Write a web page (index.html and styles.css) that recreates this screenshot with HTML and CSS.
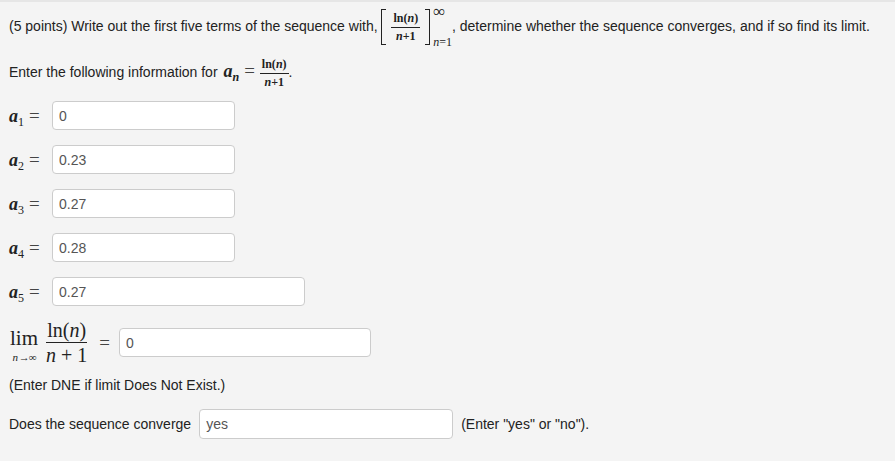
FILE: index.html
```html
<!DOCTYPE html>
<html>
<head>
    <link rel="stylesheet" href="styles.css">
</head>
<body>
    <div class="problem">
        <p class="intro">(5 points) Write out the first five terms of the sequence with,
            <span class="seq">
                <span class="bracket left"></span>
                <span class="frac small">
                    <span class="num">ln(<i>n</i>)</span>
                    <span class="den"><i>n</i>+1</span>
                </span>
                <span class="bracket right"></span>
                <span class="limits">
                    <span class="sup">∞</span>
                    <span class="sub"><i>n</i>=1</span>
                </span>
            </span>, determine whether the sequence converges, and if so find its limit.</p>

        <p class="intro second">Enter the following information for
            <span class="mvar"><i>a</i><sub><i>n</i></sub></span><span class="eq">=</span><span class="frac small">
                <span class="num">ln(<i>n</i>)</span>
                <span class="den"><i>n</i>+1</span>
            </span>.</p>

        <div class="answers">
            <div class="row">
                <span class="lbl"><i>a</i><sub>1</sub><span class="eq">=</span></span>
                <input class="ans" value="0">
            </div>
            <div class="row">
                <span class="lbl"><i>a</i><sub>2</sub><span class="eq">=</span></span>
                <input class="ans" value="0.23">
            </div>
            <div class="row">
                <span class="lbl"><i>a</i><sub>3</sub><span class="eq">=</span></span>
                <input class="ans" value="0.27">
            </div>
            <div class="row">
                <span class="lbl"><i>a</i><sub>4</sub><span class="eq">=</span></span>
                <input class="ans" value="0.28">
            </div>
            <div class="row">
                <span class="lbl"><i>a</i><sub>5</sub><span class="eq">=</span></span>
                <input class="ans wide" value="0.27">
            </div>
            <div class="row limit-row">
                <span class="lim">
                    <span class="lim-word">lim</span>
                    <span class="lim-under"><i>n</i> →∞</span>
                </span>
                <span class="frac big">
                    <span class="num">ln(<i>n</i>)</span>
                    <span class="den"><i>n</i> + 1</span>
                </span>
                <span class="eq">=</span>
                <input class="ans limit" value="0">
            </div>
        </div>

        <p class="note">(Enter DNE if limit Does Not Exist.)</p>

        <div class="converge">
            <span>Does the sequence converge</span>
            <input class="ans yesno" value="yes">
            <span>(Enter "yes" or "no").</span>
        </div>
    </div>
</body>
</html>
```

FILE: styles.css
```css
body {
    margin: 0;
    background: #f4f4f4;
    font-family: "Liberation Sans", Arial, sans-serif;
    font-size: 14px;
    color: #222;
}
.problem {
    border-top: 2px solid #e6e6e6;
    padding: 0 9px;
    height: 459px;
}
.intro {
    margin: 4px 0 0;
    line-height: 20px;
}
.intro.second {
    margin-top: 10px;
}
i {
    font-family: "Liberation Serif", "DejaVu Serif", serif;
    font-style: italic;
}
.seq {
    display: inline-flex;
    align-items: center;
    vertical-align: middle;
    height: 42px;
}
.bracket {
    width: 4px;
    height: 34px;
    border: 1.5px solid #222;
}
.bracket.left {
    border-right: none;
    margin-right: 5px;
}
.bracket.right {
    border-left: none;
    margin-left: 5px;
}
.limits {
    display: flex;
    flex-direction: column;
    justify-content: space-between;
    height: 42px;
    margin-left: 3px;
    font-family: "Liberation Serif", serif;
    font-size: 13px;
    line-height: 12px;
}
.sup {
    font-size: 17px;
    line-height: 12px;
}
.sub {
    font-size: 12px;
}
.frac {
    display: inline-flex;
    flex-direction: column;
    align-items: center;
    vertical-align: middle;
    font-family: "Liberation Serif", "DejaVu Serif", serif;
}
.frac .num {
    border-bottom: 1px solid #222;
    padding: 0 2px;
}
.frac.small {
    font-size: 12px;
    line-height: 13px;
    font-weight: bold;
}
.frac.small .num {
    padding-bottom: 2px;
}
.frac.small .den {
    padding-top: 2px;
}
.frac.big {
    font-size: 20px;
    line-height: 20px;
    margin-left: 8px;
}
.frac.big .num {
    padding: 0 1px 2px;
}
.frac.big .den {
    padding-top: 2px;
}
.mvar {
    font-size: 18px;
    margin-left: 2px;
}
.mvar i {
    font-weight: bold;
}
sub {
    font-family: "Liberation Serif", serif;
    font-size: 12px;
    vertical-align: -4px;
    line-height: 0;
}
.eq {
    font-family: "Liberation Serif", serif;
    font-size: 19px;
    color: #444;
    margin: 0 5px;
}
.answers {
    display: flex;
    flex-direction: column;
    gap: 15px;
    margin-top: 12px;
}
.row {
    display: flex;
    align-items: center;
}
.lbl {
    font-size: 18px;
    width: 43px;
    white-space: nowrap;
}
.lbl i {
    font-weight: bold;
}
.ans {
    box-sizing: border-box;
    height: 29px;
    width: 183px;
    margin: 0;
    padding: 0 6px;
    border: 1px solid #ccc;
    border-radius: 4px;
    background: #fff;
    font-family: "Liberation Sans", Arial, sans-serif;
    font-size: 14px;
    color: #555;
}
.ans.wide {
    width: 253px;
}
.limit-row {
    margin-top: -1px;
}
.lim {
    display: flex;
    flex-direction: column;
    align-items: center;
    font-family: "Liberation Serif", serif;
    padding-top: 4px;
    margin-left: 1px;
}
.lim-word {
    font-size: 21px;
    line-height: 22px;
}
.lim-under {
    font-size: 11px;
    line-height: 12px;
    margin-top: 2px;
    letter-spacing: -1px;
    white-space: nowrap;
}
.limit-row .eq {
    margin: 0 9px 0 12px;
}
.ans.limit {
    width: 252px;
}
.note {
    margin: 10px 0 0;
    line-height: 20px;
}
.converge {
    display: flex;
    align-items: center;
    gap: 8px;
    margin-top: 14px;
}
.ans.yesno {
    width: 254px;
    height: 30px;
}
```
